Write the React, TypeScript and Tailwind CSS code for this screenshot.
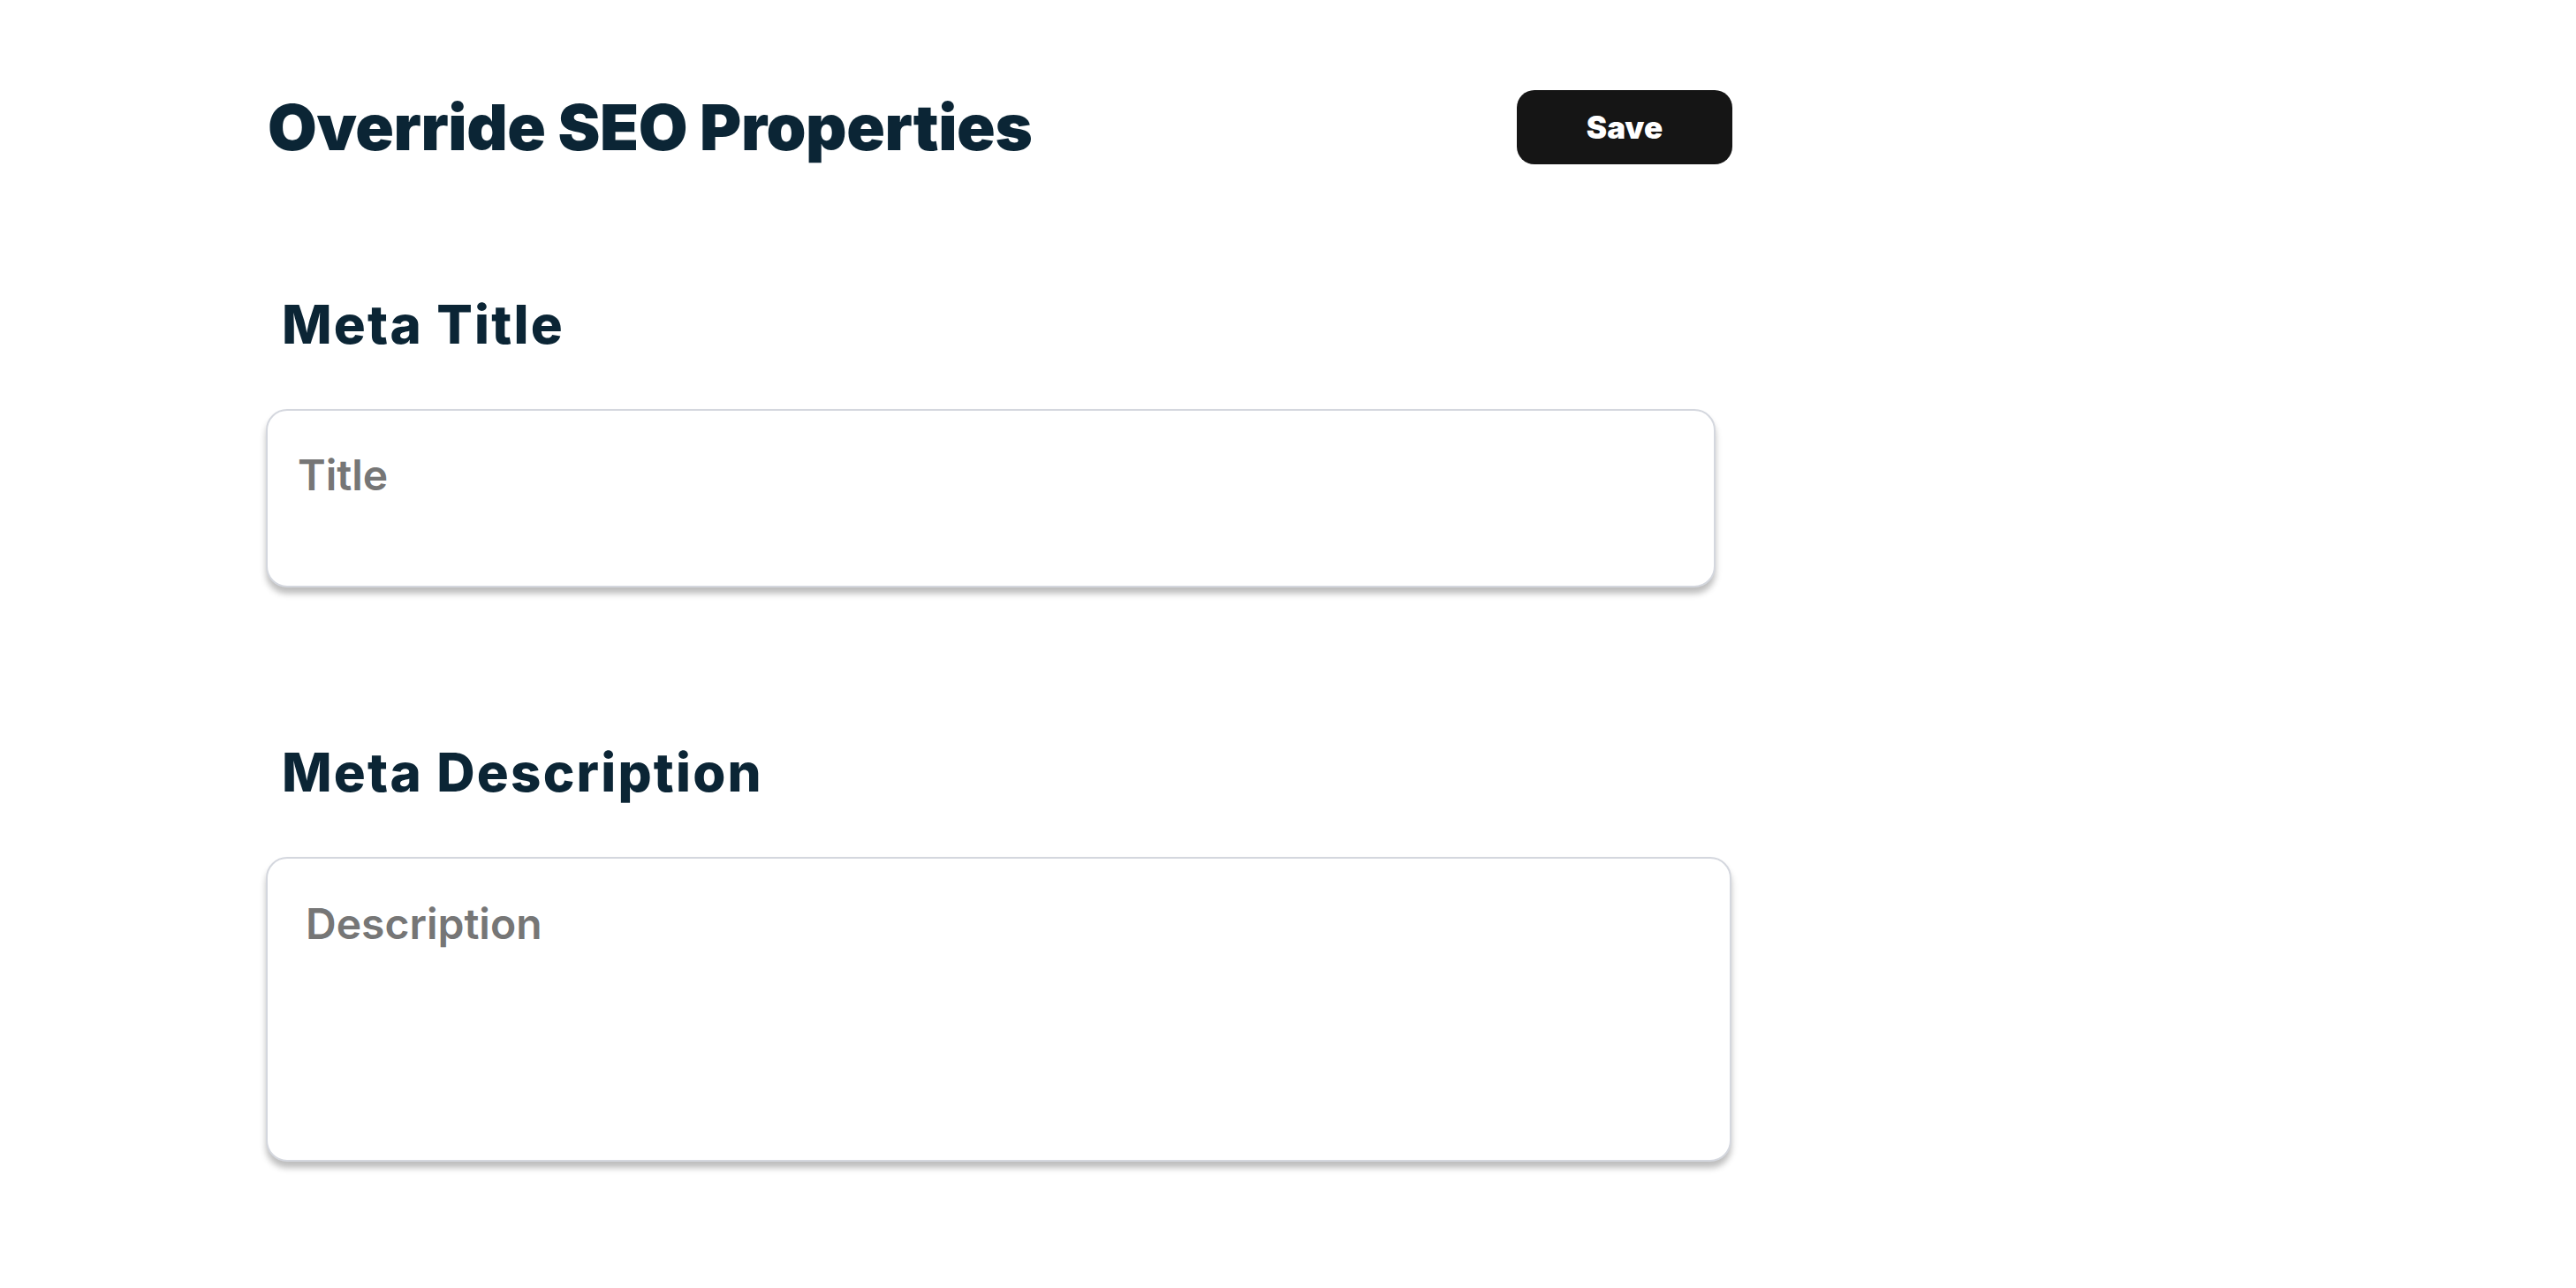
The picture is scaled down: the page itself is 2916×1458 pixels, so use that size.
import React, { useState } from 'react';

// Override SEO form — heading row with save, then two labelled fields
export default function App() {
  const [title, setTitle] = useState('');
  const [description, setDescription] = useState('');

  return (
    <div className="min-h-screen bg-white font-['Inter','Liberation_Sans',sans-serif]">
      <div className="ml-[301px] w-[1660px] pt-[102px]">
        {/* Header */}
        <div className="flex h-[84px] items-center justify-between">
          <h1 className="pl-[2px] text-[72px] font-black leading-none tracking-[-0.4px] text-[#0b2535]">
            Override SEO Properties
          </h1>
          <button className="h-[84px] w-[244px] rounded-[20px] bg-[#151515] text-[35px] font-black leading-none text-white">
            Save
          </button>
        </div>

        {/* Meta title */}
        <section className="mt-[151px]">
          <label className="block pl-[18px] text-[60px] font-extrabold leading-none tracking-[2.2px] text-[#0b2535]">
            Meta Title
          </label>
          <textarea
            value={title}
            onChange={(e) => setTitle(e.target.value)}
            placeholder="Title"
            className="mt-[66px] block h-[202px] w-[1641px] resize-none rounded-[24px] border-2 border-[#d4d7de] bg-white pl-[34px] pt-[49px] text-[48px] font-semibold leading-none text-[#333] shadow-[0_7px_7px_rgba(0,0,0,0.26)] outline-none placeholder:text-[#767676]"
          />
        </section>

        {/* Meta description */}
        <section className="mt-[179px]">
          <label className="block pl-[18px] text-[60px] font-extrabold leading-none tracking-[2.2px] text-[#0b2535]">
            Meta Description
          </label>
          <textarea
            value={description}
            onChange={(e) => setDescription(e.target.value)}
            placeholder="Description"
            className="mt-[66px] block h-[345px] w-[1659px] resize-none rounded-[24px] border-2 border-[#d4d7de] bg-white pl-[43px] pt-[50px] text-[48px] font-semibold leading-none text-[#333] shadow-[0_7px_7px_rgba(0,0,0,0.26)] outline-none placeholder:text-[#767676]"
          />
        </section>
      </div>
    </div>
  );
}
